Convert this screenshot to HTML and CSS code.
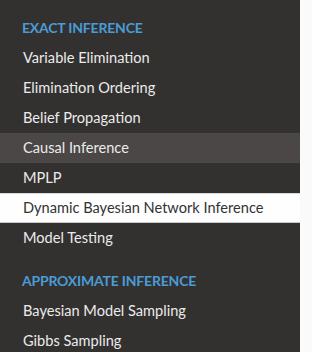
FILE: index.html
```html
<!DOCTYPE html>
<html>
<head>
<meta charset="utf-8">
<link rel="stylesheet" href="styles.css">
</head>
<body>
<nav class="sidebar">
  <div class="section">
    <div class="section-title">Exact Inference</div>
    <ul class="items">
      <li class="item">Variable Elimination</li>
      <li class="item">Elimination Ordering</li>
      <li class="item">Belief Propagation</li>
      <li class="item hover">Causal Inference</li>
      <li class="item">MPLP</li>
      <li class="item active">Dynamic Bayesian Network Inference</li>
      <li class="item">Model Testing</li>
    </ul>
  </div>
  <div class="section">
    <div class="section-title">Approximate Inference</div>
    <ul class="items">
      <li class="item">Bayesian Model Sampling</li>
      <li class="item">Gibbs Sampling</li>
    </ul>
  </div>
</nav>
</body>
</html>
```
FILE: styles.css
```css
html, body {
  margin: 0;
  padding: 0;
  background: #fafafa;
  height: 100%;
}
body {
  font-family: Lato, "Open Sans", sans-serif;
  overflow: hidden;
}
.sidebar {
  width: 300px;
  height: 100%;
  background: #333130;
  display: flex;
  flex-direction: column;
}
.section {
  padding-top: 10px;
}
.section-title {
  height: 33px;
  box-sizing: border-box;
  padding-top: 2px;
  line-height: 31px;
  padding-left: 22px;
  color: #4a9cd6;
  font-weight: bold;
  font-size: 14px;
  text-transform: uppercase;
  letter-spacing: -0.2px;
}
.items {
  list-style: none;
  margin: 0;
  padding: 0;
}
.item {
  height: 30px;
  line-height: 30px;
  padding-left: 23px;
  color: #ebebeb;
  font-size: 14.6px;
  box-sizing: border-box;
}
.item.hover {
  background: #4a4746;
}
.item.active {
  background: #fefefe;
  color: #333;
  border-top: 1px solid #d8d8d8;
  border-bottom: 1px solid #c8c8c8;
  line-height: 28px;
}
```
